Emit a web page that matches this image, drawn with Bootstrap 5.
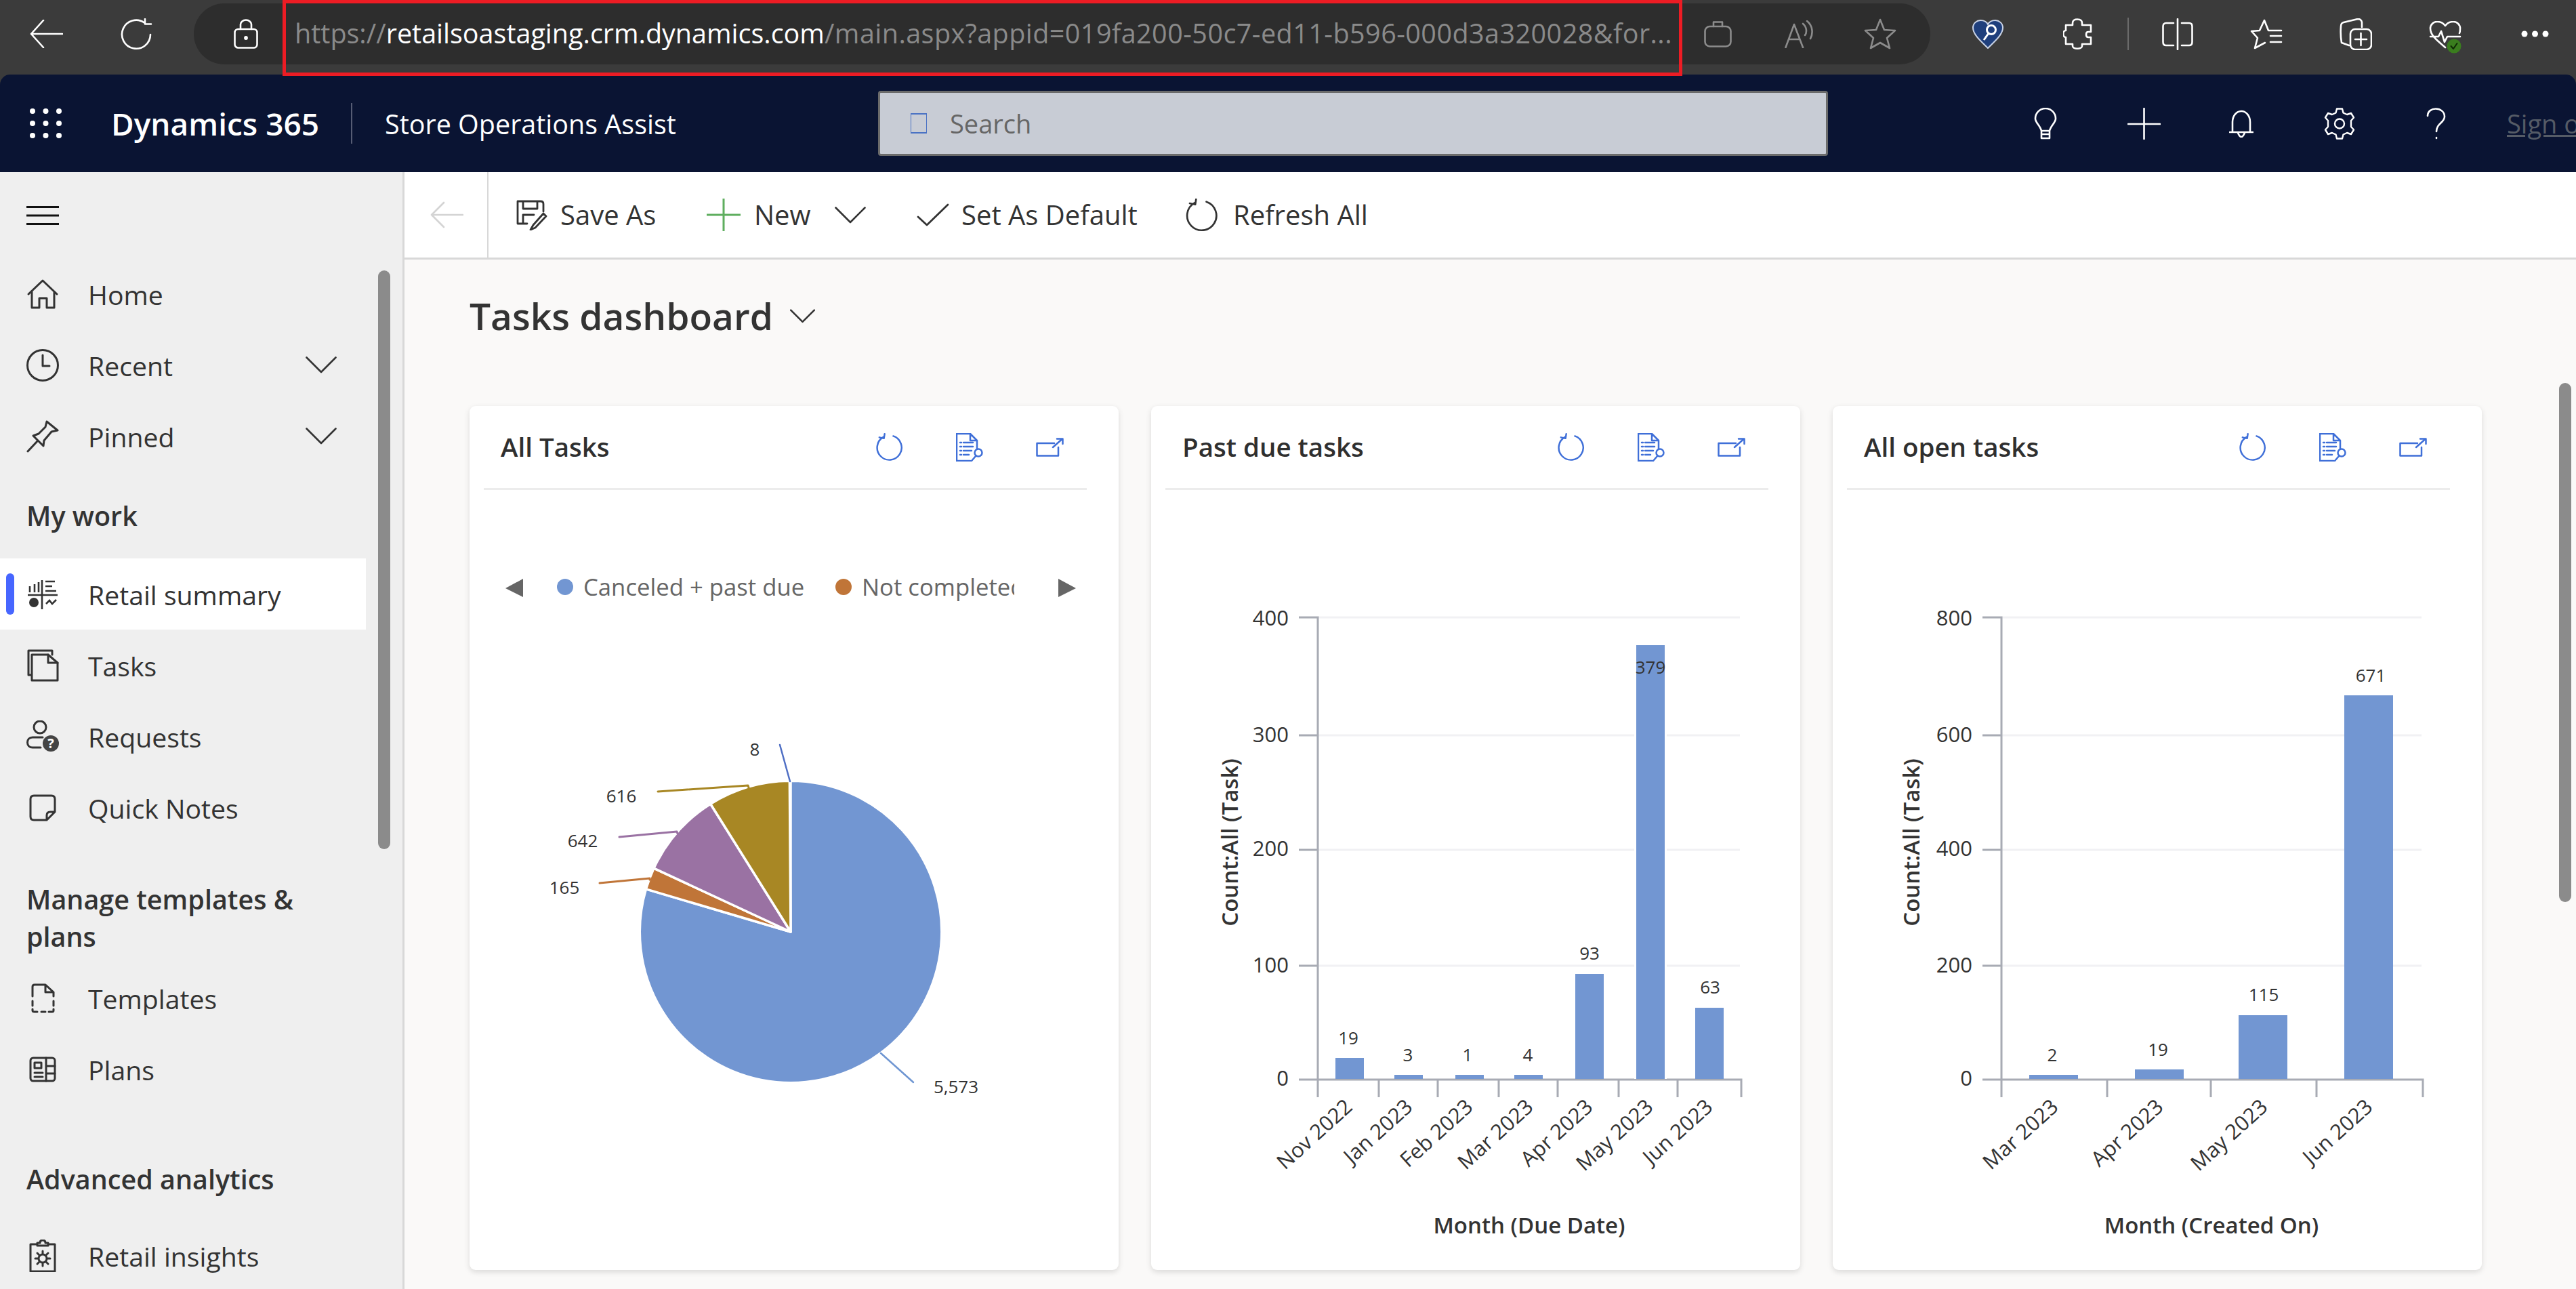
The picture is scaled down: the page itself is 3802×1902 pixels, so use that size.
<!DOCTYPE html>
<html lang="en">
<head>
<meta charset="utf-8">
<title>Tasks dashboard</title>
<link href="https://cdn.jsdelivr.net/npm/bootstrap@5.3.0/dist/css/bootstrap.min.css" rel="stylesheet">
<style>
html,body{width:3802px;height:1902px;margin:0;overflow:hidden;background:#faf9f8;font-family:"Open Sans","Noto Sans",sans-serif;color:#333}
svg{display:block;flex:none}
.ln{fill:none;stroke:currentColor;stroke-linecap:round;stroke-linejoin:round}
.shell{position:relative;width:3802px;height:1902px;overflow:hidden}
.red-box{position:absolute;left:417px;top:0;width:2066px;height:112px;border:5px solid #ed1c24;z-index:5;pointer-events:none}
.chrome{height:110px;background:#3b3b3b;padding-bottom:10px;color:#fff}
.pill{width:2563px;height:90px;margin-left:61px;background:#2d2d2d;border-radius:45px;padding-left:59px}
.url{width:2040px;margin-left:54px;margin-right:-10px;font-size:39.500px;line-height:1.4;white-space:nowrap;color:#8a8a8a}
.url b{font-weight:400;color:#fff}
.url i{font-style:normal;letter-spacing:.45px}
.dim{color:#8c8c8c}
.sep-v{width:2px;height:48px;background:#6b6b6b}
.app-head{height:144px;background:#3b3b3b}
.navbar.app-bar{height:144px;padding:0;background:#0a1433;border-radius:15px 15px 0 0;color:#fff;flex-wrap:nowrap;justify-content:flex-start}
.brand-name{width:302px;margin-left:73px;font-size:46px;font-weight:600;white-space:nowrap}
.head-div{width:2px;height:60px;margin-left:52px;background:#565c74}
.store-name{width:425px;margin-left:48px;margin-right:2px;padding-top:3px;font-size:39.500px;white-space:nowrap}
.search-box{width:1402px;height:96px;margin-left:301px;background:#c8ccd5;border:3px solid #6b6b6b;border-radius:4px;padding-left:45px;color:#666;font-size:38px}
.tofu{width:24px;height:30px;border:2px solid #4a72c4;border-width:2px 1px;margin-right:34px}
.sign{margin-left:90px;width:102px;overflow:hidden;white-space:nowrap;color:#555b66;text-decoration:underline;font-size:38px}
.work{height:1648px}
.side{width:597px;flex:none;background:#efefef;border-right:3px solid #d8d8d8;position:relative;overflow:hidden}
.burger{height:127px;padding-left:39px}
.nav-link.side-row{height:105px;width:540px;padding:4px 0 0 39px;color:#333;font-size:39.200px;white-space:nowrap;position:relative}
.nav-link.side-row:hover{color:#333}
.side-row svg{margin:-4px 43px 0 0}
.side-row .chev{margin:-4px 43px 0 auto}
.side-row.on{background:#fff}
.side-row.on::before{content:"";position:absolute;left:9px;top:22px;width:12px;height:61px;background:#4766ff;border-radius:6px}
.side-h{margin:0;padding:38px 60px 35px 39px;font-size:39.500px;line-height:55px;font-weight:600;color:#333}
.side-h.h2b{padding:56px 60px 10px 39px}
.side-h.h3b{padding:83px 60px 32px 39px}
.thumb{position:absolute;border-radius:9px;background:#8b8b8b;width:18px;z-index:3}
.thumb.t1{left:558px;top:145px;height:854px}
.thumb.t2{left:3180px;top:311px;height:766px}
.main{position:relative;flex:1 1 auto;min-width:0}
.cmd{height:129px;background:#fff;border-bottom:3px solid #d8d8d8}
.cmd-back{width:124px;height:126px;border-right:2px solid #d8d8d8;padding-left:38px;color:#d4d4d4}
.btn.cmd-btn{display:flex;align-items:center;padding:0;border:0;border-radius:0;font-size:40px;color:#333;white-space:nowrap;line-height:1}
.b-save{margin-left:41px;gap:19px}
.b-new{margin-left:73px;gap:20px}
.b-more{margin-left:34px}
.b-def{margin-left:75px;gap:18px}
.b-ref{margin-left:68px;gap:22px}
.cmd-t1{width:143px;text-align:left}.cmd-t2{width:85px;text-align:left}.cmd-t3{width:262px;text-align:left}
.board{padding:50px 0 0 96px}
.board-title{margin:0 0 100px;font-size:55px;line-height:66px;font-weight:600;color:#333;display:flex;align-items:center;gap:25px}
.cards{gap:48px}
.card.tile{width:958px;height:1275px;border:0;border-radius:9px;background:#fff;box-shadow:0 3px 8px rgba(0,0,0,.13);flex:none;--bs-card-cap-bg:transparent}
.card-header.tile-h{height:124px;margin:0 47px 0 21px;padding:0 34px 0 25px;border:0;border-bottom:3px solid #ececec;border-radius:0;background:none;color:#2f2f2f}
.tile-t{font-size:38.500px;font-weight:600;margin:0;line-height:1;white-space:nowrap}
.tile-i{color:#3f6fd8;margin-left:auto;gap:78px}
.chart{width:958px;height:1151px}
.chart text{font-family:"Open Sans","Noto Sans",sans-serif;fill:#333}
.t-y{font-size:31px;text-anchor:end;dominant-baseline:central}
.t-v{font-size:26px;text-anchor:middle;dominant-baseline:central}
.t-x{font-size:31px;text-anchor:end}
.t-a{font-size:33px;font-weight:600;text-anchor:middle;dominant-baseline:central}
.t-l{font-size:34.700px;dominant-baseline:central}
.chart .t-l{fill:#666}
.axis{stroke:#a8abb4;stroke-width:3;fill:none}
.grid{stroke:#f1f1f4;stroke-width:3;fill:none}
.bar{fill:#7296d2}
.halo{fill:#fff}
</style>
</head>
<body>
<svg width="0" height="0" style="position:absolute">
  <symbol id="i-refresh" viewBox="0 0 42 42"><path class="ln" stroke-width="2.500" d="M27 4A18.500 18.500 0 1 1 12 5.500M14 .8 13 7.500 6 6"/></symbol>
  <symbol id="i-doc" viewBox="0 0 40 42"><path class="ln" stroke-width="2.500" d="M21 41H1V1H21L31 11V24M21 1V11H31M6 14H8M11 14H25M6 20H8M11 20H25M6 26H8M11 26H23M6 32H8M11 32H19"/><circle class="ln" stroke-width="2.500" cx="33" cy="29" r="5.500"/><path class="ln" stroke-width="2.500" d="M29.500 33.500 23 41"/></symbol>
  <symbol id="i-open" viewBox="0 0 41 28"><path class="ln" stroke-width="2.500" d="M27 8H1.500V26.500H33V14M25 14 39 1.500M31 1.500H39.500V9"/></symbol>
  <symbol id="i-chev" viewBox="0 0 46 25"><path class="ln" stroke-width="2.600" d="M1.500 1.500 23 23 44.500 1.500"/></symbol>
</svg>
<div class="shell">
<div class="red-box"></div>

<div class="chrome d-flex align-items-center">
  <svg class="ln" style="margin-left:44px" width="49" height="42" viewBox="0 0 49 42" stroke-width="2.600"><path d="M48 21H2M20 1 2 21 20 41"/></svg>
  <svg class="ln" style="margin-left:84px" width="48" height="47" viewBox="0 0 48 47" stroke-width="2.600"><path d="M36 6.500A21 21 0 1 0 45 24M37 1V8.500H46"/></svg>
  <div class="pill d-flex align-items-center">
    <svg class="ln" width="36" height="44" viewBox="0 0 36 44" stroke-width="2.600"><rect x="1.500" y="15" width="33" height="27.500" rx="5"/><path d="M10 15V8A8 6.500 0 0 1 26 8V15"/><circle cx="18" cy="28" r="1.600" fill="#fff"/></svg>
    <div class="url">https://<b>retailsoastaging.crm.dynamics.com</b><i>/main.aspx?appid=019fa200-50c7-ed11-b596-000d3a320028&amp;for...</i></div>
    <svg class="ln dim" style="margin-left:50px" width="41" height="39" viewBox="0 0 41 39" stroke-width="2.600"><rect x="1.500" y="8" width="38" height="29.500" rx="7"/><path d="M14 8V1.500H27V8"/></svg>
    <svg class="ln dim" style="margin-left:78px" width="45" height="41" viewBox="0 0 45 41" stroke-width="2.600"><path d="M1.500 40 14 6 27 40M6 28H22M27 5C33 10 33 18 30 22M33 1C42 8 42 20 38 27"/></svg>
    <svg class="ln dim" style="margin-left:72px" width="48" height="46" viewBox="0 0 48 46" stroke-width="2.600"><path d="M24 2 30 17 46 18 34 29 38 44 24 36 10 44 14 29 2 18 18 17Z"/></svg>
  </div>
  <svg style="margin-left:61px" width="48" height="43" viewBox="0 0 48 43"><path fill="#1f3f7c" stroke="#c9d3e6" stroke-width="2" d="M24 42C14 32 2 22 2 12 2 5 8 1 13 1 18 1 22 3 24 7 26 3 30 1 35 1 40 1 46 5 46 12 46 22 34 32 24 42Z"/><circle cx="29" cy="15" r="6.500" fill="none" stroke="#fff" stroke-width="3"/><path stroke="#fff" stroke-width="3" d="M25 20 18 30"/></svg>
  <svg class="ln" style="margin-left:87px" width="43" height="47" viewBox="0 0 43 47" stroke-width="2.600"><path d="M14 7C14 3 17 1.500 21 1.500 25 1.500 28 3 28 7V10H41V20H37C33 20 33 28 37 28H41V38H28V41C28 46 14 46 14 41V38H4V28C-1 28-1 18 4 18V10H14Z"/></svg>
  <div class="sep-v" style="margin-left:52px"></div>
  <svg class="ln" style="margin-left:49px" width="46" height="47" viewBox="0 0 46 47" stroke-width="2.600"><path d="M23 1V46M17 7H6Q1.500 7 1.500 12V35Q1.500 40 6 40H17M29 7H40Q44.500 7 44.500 12V35Q44.500 40 40 40H29"/></svg>
  <svg class="ln" style="margin-left:84px" width="48" height="45" viewBox="0 0 48 45" stroke-width="2.600"><path d="M21 2 14 17 2 18 11 28 7 43 22 35M21 2 27 17H46M30 25H46M30 34H46"/></svg>
  <svg class="ln" style="margin-left:84px" width="48" height="47" viewBox="0 0 48 47" stroke-width="2.600"><path d="M14 40 3 36Q1 24 2 12 2 7 6 6L27 1Q32 1 33 6V13"/><rect x="16" y="16" width="31" height="30" rx="7"/><path d="M31.500 22V40M23 31H40"/></svg>
  <svg style="margin-left:84px;margin-top:9px" width="48" height="48" viewBox="0 0 48 48"><path class="ln" stroke-width="2.600" d="M24 39C14 30 2 22 2 11 2 5 7 1 12 1 17 1 21 3 24 7 27 3 31 1 36 1 41 1 46 5 46 11 46 14 46 16 45 18M2 23H14L18 15 23 31 27 23H46"/><circle cx="37" cy="37" r="10.500" fill="#3a7d1e"/><path class="ln" style="color:#0f2a05" stroke-width="2" d="M32.500 37 36 41 41.500 33"/></svg>
  <svg style="margin-left:88px" width="41" height="10" viewBox="0 0 41 10" fill="#fff"><circle cx="5" cy="5" r="4.500"/><circle cx="20.500" cy="5" r="4.500"/><circle cx="36" cy="5" r="4.500"/></svg>
</div>

<div class="app-head">
<nav class="navbar app-bar align-items-center">
  <svg style="margin-left:44px" width="47" height="44" viewBox="0 0 47 44" fill="#fff"><circle cx="4" cy="4" r="4"/><circle cx="23.500" cy="4" r="4"/><circle cx="43" cy="4" r="4"/><circle cx="4" cy="22" r="4"/><circle cx="23.500" cy="22" r="4"/><circle cx="43" cy="22" r="4"/><circle cx="4" cy="40" r="4"/><circle cx="23.500" cy="40" r="4"/><circle cx="43" cy="40" r="4"/></svg>
  <span class="brand-name">Dynamics 365</span>
  <div class="head-div"></div>
  <span class="store-name">Store Operations Assist</span>
  <div class="search-box d-flex align-items-center"><span class="tofu"></span><span>Search</span></div>
  <svg class="ln" style="margin-left:304px" width="34" height="47" viewBox="0 0 34 47" stroke-width="2.600"><path d="M11 34C9 26 2 22 2 16A15 15 0 0 1 32 16C32 22 25 26 23 34ZM11 34V45H23V34M11 39H23"/></svg>
  <svg class="ln" style="margin-left:104px" width="49" height="47" viewBox="0 0 49 47" stroke-width="2.600"><path d="M24.500 1V46M1 24H48"/></svg>
  <svg class="ln" style="margin-left:101px" width="36" height="41" viewBox="0 0 36 41" stroke-width="2.600"><path d="M5 32V18A13 16 0 0 1 31 18V32M1 33H35M13 34Q18 46 23 34"/></svg>
  <svg class="ln" style="margin-left:103px" width="48" height="47" viewBox="0 0 48 47" stroke-width="2.400"><path d="M20 1.500H28L29.500 7.500 35 10 41 8 45 14.500 41 19V28L45 32.500 41 39 35 37 29.500 39.500 28 45.500H20L18.500 39.500 13 37 7 39 3 32.500 7 28V19L3 14.500 7 8 13 10 18.500 7.500Z"/><circle cx="24" cy="23.500" r="7"/></svg>
  <svg class="ln" style="margin-left:104px" width="29" height="47" viewBox="0 0 29 47" stroke-width="2.600"><path d="M2 12C2 5 8 1.500 14 1.500 21 1.500 27 6 27 13 27 22 15 23 15 35M15 44V45"/></svg>
  <a class="sign" href="#">Sign out</a>
</nav>
</div>

<div class="work d-flex">
  <aside class="side">
    <div class="burger d-flex align-items-center"><svg width="48" height="28" viewBox="0 0 48 28" fill="#111"><rect width="48" height="3"/><rect y="12.500" width="48" height="3"/><rect y="25" width="48" height="3"/></svg></div>
    <nav class="nav flex-column flex-nowrap">
      <a class="nav-link side-row d-flex align-items-center" href="#"><svg class="ln" width="48" height="48" viewBox="0 0 48 48" stroke-width="3"><path d="M3 24 24 4 45 24M8 20V44H19V30H30V44H41V20"/></svg>Home</a>
      <a class="nav-link side-row d-flex align-items-center" href="#"><svg class="ln" width="48" height="48" viewBox="0 0 48 48" stroke-width="3"><circle cx="24" cy="24" r="22.500"/><path d="M24 9V25H34"/></svg>Recent<svg class="chev" width="46" height="25"><use href="#i-chev"/></svg></a>
      <a class="nav-link side-row d-flex align-items-center" href="#"><svg class="ln" width="48" height="48" viewBox="0 0 48 48" stroke-width="3"><path d="M30 2 46 15 37 17 26 30 25 38 10 23 18 20 28 10ZM17 30 2 46"/></svg>Pinned<svg class="chev" width="46" height="25"><use href="#i-chev"/></svg></a>
    </nav>
    <h2 class="side-h">My work</h2>
    <nav class="nav flex-column flex-nowrap">
      <a class="nav-link side-row on d-flex align-items-center" href="#"><svg width="48" height="48" viewBox="0 0 48 48" fill="none" stroke="#333" stroke-width="2.600"><path d="M2 25H46M23 3V46M5 12V21M12 9V21M18 6V21M28 5H42M28 12H38M28 19H44M29 38 34 33 38 38 44 32"/><circle cx="11" cy="36" r="7" fill="#333" stroke="none"/></svg>Retail summary</a>
      <a class="nav-link side-row d-flex align-items-center" href="#"><svg class="ln" width="48" height="48" viewBox="0 0 48 48" stroke-width="3"><path d="M8 38H3V2H38V8M8 38V8H32L46 20V46H8Z"/><path d="M32 8V20H46"/></svg>Tasks</a>
      <a class="nav-link side-row d-flex align-items-center" href="#"><svg width="48" height="48" viewBox="0 0 48 48"><circle class="ln" stroke-width="3" cx="20" cy="10" r="9"/><path class="ln" stroke-width="3" d="M24 25H9C-1 25-1 40 9 40H21"/><circle cx="36" cy="34" r="12" fill="#444"/><text x="36" y="41" text-anchor="middle" font-size="20" font-weight="700" fill="#fff" font-family="Open Sans">?</text></svg>Requests</a>
      <a class="nav-link side-row d-flex align-items-center" href="#"><svg class="ln" width="48" height="48" viewBox="0 0 48 48" stroke-width="3"><path d="M30 42H11Q6 42 6 37V11Q6 6 11 6H37Q42 6 42 11V30ZM30 42V35Q30 30 35 30H42"/></svg>Quick Notes</a>
    </nav>
    <h2 class="side-h h2b">Manage templates &amp; plans</h2>
    <nav class="nav flex-column flex-nowrap">
      <a class="nav-link side-row d-flex align-items-center" href="#"><svg class="ln" width="48" height="48" viewBox="0 0 48 48" stroke-width="3"><path d="M9 21V7Q9 4 12 4H28L40 15V21M9 28V35M40 28V35M9 40V42Q9 44 12 44H16M22 44H28M33 44H38Q40 44 40 42V40M28 4V15H40"/></svg>Templates</a>
      <a class="nav-link side-row d-flex align-items-center" href="#"><svg class="ln" width="48" height="48" viewBox="0 0 48 48" stroke-width="3"><rect x="6" y="7" width="36" height="34" rx="4"/><path d="M29 7V41M29 19H42M29 30H42M12 29H24M12 35H24"/><rect x="12" y="14" width="10" height="8"/></svg>Plans</a>
    </nav>
    <h2 class="side-h h3b">Advanced analytics</h2>
    <nav class="nav flex-column flex-nowrap">
      <a class="nav-link side-row d-flex align-items-center" href="#"><svg class="ln" width="48" height="48" viewBox="0 0 48 48" stroke-width="3"><path d="M16 7H6V47H42V7H32M16 9V5H20Q20 1 24 1 28 1 28 5H32V9Z"/><circle cx="24" cy="28" r="6"/><path d="M24 17V21M24 35V39M13 28H17M31 28H35M16 20 19 23M29 33 32 36M16 36 19 33M29 23 32 20"/></svg>Retail insights</a>
    </nav>
    <div class="thumb t1"></div>
  </aside>

  <main class="main">
    <div class="cmd d-flex align-items-center">
      <div class="cmd-back d-flex align-items-center"><svg class="ln" width="49" height="40" viewBox="0 0 49 40" stroke-width="2.600"><path d="M48 20H2M20 2 2 20 20 38"/></svg></div>
      <button class="btn cmd-btn b-save" type="button"><svg class="ln" width="46" height="46" viewBox="0 0 46 46" stroke-width="2.800"><path d="M16 36H2V3H36Q40 3 40 7V18M10 3V14H31V3M10 36V23H26M44 25 40 21 25 38 21 45 28 42Z"/></svg><span class="cmd-t1">Save As</span></button>
      <button class="btn cmd-btn b-new" type="button"><svg width="50" height="48" viewBox="0 0 50 48"><path stroke="#5fae5f" stroke-width="3" d="M25 0V48M0 24H50"/></svg><span class="cmd-t2">New</span></button>
      <button class="btn cmd-btn b-more" type="button" aria-label="More"><svg width="46" height="25"><use href="#i-chev"/></svg></button>
      <button class="btn cmd-btn b-def" type="button"><svg class="ln" width="48" height="34" viewBox="0 0 48 34" stroke-width="2.800"><path d="M2 20 15 32 46 2"/></svg><span class="cmd-t3">Set As Default</span></button>
      <button class="btn cmd-btn b-ref" type="button"><svg class="ln" width="49" height="49" viewBox="0 0 42 42" stroke-width="2.300"><path d="M27 4A18.500 18.500 0 1 1 12 5.500M14 .8 13 7.500 6 6"/></svg><span>Refresh All</span></button>
    </div>
    <div class="board">
      <h1 class="board-title">Tasks dashboard <svg class="ln" width="37" height="21" viewBox="0 0 46 25" stroke-width="3.200"><path d="M1.500 1.500 23 23 44.500 1.500"/></svg></h1>
      <div class="cards d-flex">

        <div class="card tile">
          <div class="card-header tile-h d-flex align-items-center"><h3 class="tile-t">All Tasks</h3>
            <div class="tile-i d-flex align-items-center"><svg width="41" height="42"><use href="#i-refresh"/></svg><svg width="40" height="42"><use href="#i-doc"/></svg><svg width="41" height="28"><use href="#i-open"/></svg></div></div>
          <svg class="chart" viewBox="693 723 958 1151">
            <defs><clipPath id="legclip"><rect x="800" y="830" width="697" height="80"/></clipPath></defs>
            <path fill="#666" d="M772 854V881L746 868Z"/><path fill="#666" d="M1562 854V881L1588 868Z"/>
            <g clip-path="url(#legclip)">
              <circle cx="834" cy="866" r="12" fill="#7296d2"/><text class="t-l" x="861" y="865">Canceled + past due</text>
              <circle cx="1245" cy="866" r="12" fill="#c07538"/><text class="t-l" x="1272" y="865">Not completed</text>
            </g>
            <g stroke="#fff" stroke-width="3.500" stroke-linejoin="round" transform="translate(1167 1375) scale(1.008) translate(-1167 -1375)">
              <path fill="#7296d2" d="M1167 1375V1154A221 221 0 1 1 955.100 1312.400Z"/>
              <path fill="#c07538" d="M1167 1375 955.100 1312.400A221 221 0 0 1 966.600 1281.900Z"/>
              <path fill="#9a72a3" d="M1167 1375 966.600 1281.900A221 221 0 0 1 1049.600 1187.700Z"/>
              <path fill="#a88724" d="M1167 1375 1049.600 1187.700A221 221 0 0 1 1165.400 1154Z"/>
            </g>
            <g fill="none" stroke-width="2.500" stroke-linejoin="round" stroke-linecap="round">
              <path stroke="#4f6fc4" d="M1151 1099 1166 1153"/>
              <path stroke="#a88724" stroke-width="3" d="M971 1168 1104 1159 1105 1162"/>
              <path stroke="#9a72a3" stroke-width="3" d="M914 1235 999 1227 1000 1230"/>
              <path stroke="#c07538" stroke-width="3" d="M885 1303 959 1296 959 1298"/>
              <path stroke="#6f96d2" d="M1300 1554 1348 1597"/>
            </g>
            <text class="t-v" x="1114" y="1105">8</text><text class="t-v" x="917" y="1174">616</text><text class="t-v" x="860" y="1240">642</text><text class="t-v" x="833" y="1309">165</text><text class="t-v" x="1411" y="1603">5,573</text>
          </svg>
        </div>

        <div class="card tile">
          <div class="card-header tile-h d-flex align-items-center"><h3 class="tile-t">Past due tasks</h3>
            <div class="tile-i d-flex align-items-center"><svg width="41" height="42"><use href="#i-refresh"/></svg><svg width="40" height="42"><use href="#i-doc"/></svg><svg width="41" height="28"><use href="#i-open"/></svg></div></div>
          <svg class="chart" viewBox="1700 723 958 1151">
            <path class="grid" d="M1946 911H2569M1946 1085H2569M1946 1254H2569M1946 1425H2569"/>
            <path class="axis" d="M1918 911H1946V1619M1918 1085H1946M1918 1254H1946M1918 1425H1946M1918 1593H2571V1619M2036 1593V1619M2123 1593V1619M2213 1593V1619M2300 1593V1619M2390 1593V1619M2477 1593V1619"/>
            <rect class="bar" x="1972" y="1561" width="42" height="31"/><rect class="bar" x="2059" y="1586" width="42" height="6"/><rect class="bar" x="2149" y="1586" width="42" height="6"/><rect class="bar" x="2236" y="1586" width="42" height="6"/><rect class="bar" x="2326" y="1437" width="42" height="155"/><rect class="halo" x="2413" y="950" width="48" height="642"/><rect class="bar" x="2416" y="952" width="42" height="640"/><rect class="bar" x="2503" y="1487" width="42" height="105"/>
            <text class="t-v" x="1991" y="1531">19</text><text class="t-v" x="2079" y="1556">3</text><text class="t-v" x="2167" y="1556">1</text><text class="t-v" x="2256" y="1556">4</text><text class="t-v" x="2347" y="1406">93</text><text class="t-v" x="2437" y="984">379</text><text class="t-v" x="2525" y="1456">63</text>
            <text class="t-y" x="1903" y="911">400</text><text class="t-y" x="1903" y="1083">300</text><text class="t-y" x="1903" y="1251">200</text><text class="t-y" x="1903" y="1423">100</text><text class="t-y" x="1903" y="1590">0</text>
            <text class="t-x" transform="translate(1999 1636) rotate(-42)">Nov 2022</text><text class="t-x" transform="translate(2088 1636) rotate(-42)">Jan 2023</text><text class="t-x" transform="translate(2177 1636) rotate(-42)">Feb 2023</text><text class="t-x" transform="translate(2266 1636) rotate(-42)">Mar 2023</text><text class="t-x" transform="translate(2354 1636) rotate(-42)">Apr 2023</text><text class="t-x" transform="translate(2443 1636) rotate(-42)">May 2023</text><text class="t-x" transform="translate(2531 1636) rotate(-42)">Jun 2023</text>
            <text class="t-a" transform="translate(1815 1243) rotate(-90)">Count:All (Task)</text>
            <text class="t-a" x="2258" y="1807">Month (Due Date)</text>
          </svg>
        </div>

        <div class="card tile">
          <div class="card-header tile-h d-flex align-items-center"><h3 class="tile-t">All open tasks</h3>
            <div class="tile-i d-flex align-items-center"><svg width="41" height="42"><use href="#i-refresh"/></svg><svg width="40" height="42"><use href="#i-doc"/></svg><svg width="41" height="28"><use href="#i-open"/></svg></div></div>
          <svg class="chart" viewBox="2706 723 958 1151">
            <path class="grid" d="M2955 911H3575M2955 1085H3575M2955 1254H3575M2955 1425H3575"/>
            <path class="axis" d="M2927 911H2955V1619M2927 1085H2955M2927 1254H2955M2927 1425H2955M2927 1593H3577V1619M3111 1593V1619M3264 1593V1619M3420 1593V1619"/>
            <rect class="bar" x="2996" y="1586" width="72" height="6"/><rect class="bar" x="3152" y="1578" width="72" height="14"/><rect class="bar" x="3305" y="1498" width="72" height="94"/><rect class="bar" x="3461" y="1026" width="72" height="566"/>
            <text class="t-v" x="3030" y="1556">2</text><text class="t-v" x="3186" y="1548">19</text><text class="t-v" x="3342" y="1467">115</text><text class="t-v" x="3500" y="996">671</text>
            <text class="t-y" x="2912" y="911">800</text><text class="t-y" x="2912" y="1083">600</text><text class="t-y" x="2912" y="1251">400</text><text class="t-y" x="2912" y="1423">200</text><text class="t-y" x="2912" y="1590">0</text>
            <text class="t-x" transform="translate(3041 1636) rotate(-42)">Mar 2023</text><text class="t-x" transform="translate(3196 1636) rotate(-42)">Apr 2023</text><text class="t-x" transform="translate(3350 1636) rotate(-42)">May 2023</text><text class="t-x" transform="translate(3505 1636) rotate(-42)">Jun 2023</text>
            <text class="t-a" transform="translate(2821 1243) rotate(-90)">Count:All (Task)</text>
            <text class="t-a" x="3265" y="1807">Month (Created On)</text>
          </svg>
        </div>

      </div>
    </div>
    <div class="thumb t2"></div>
  </main>
</div>
</div>
<script src="https://cdn.jsdelivr.net/npm/bootstrap@5.3.0/dist/js/bootstrap.bundle.min.js"></script>
</body>
</html>
